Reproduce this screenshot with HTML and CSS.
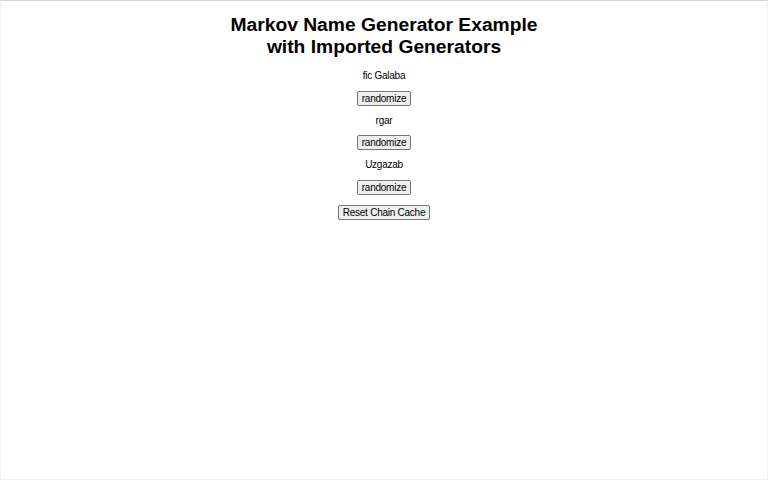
FILE: index.html
```html
<!DOCTYPE html>
<html lang="en">
<head>
    <meta charset="UTF-8">
    <title>Markov Name Generator Example</title>
    <link rel="stylesheet" href="styles.css">
</head>
<body>
    <h1>Markov Name Generator Example<br>with Imported Generators</h1>

    <main class="generators">
        <div class="generator">
            <p class="name">fic Galaba</p>
            <button>randomize</button>
        </div>
        <div class="generator">
            <p class="name">rgar</p>
            <button>randomize</button>
        </div>
        <div class="generator">
            <p class="name">Uzgazab</p>
            <button>randomize</button>
        </div>
        <button class="reset">Reset Chain Cache</button>
    </main>
</body>
</html>
```

FILE: styles.css
```css
* {
    box-sizing: border-box;
}

html, body {
    height: 100%;
}

body {
    margin: 0;
    border-top: 1px solid #d6d6d6;
    border-left: 1px solid #f2f2f2;
    border-right: 1px solid #f2f2f2;
    border-bottom: 1px solid #f2f2f2;
    font-family: "Liberation Sans", Arial, sans-serif;
    color: #000;
    background: #fff;
    text-align: center;
}

h1 {
    font-size: 19.25px;
    line-height: 22px;
    margin: 13px 0 11px;
}

.generators {
    display: flex;
    flex-direction: column;
    align-items: center;
    gap: 8px;
}

.generator {
    display: flex;
    flex-direction: column;
    align-items: center;
    gap: 8.5px;
}

.name {
    margin: 0;
    font-size: 10px;
    letter-spacing: -0.25px;
    line-height: 13px;
}

button {
    font-family: "Liberation Sans", Arial, sans-serif;
    font-size: 10px;
    letter-spacing: -0.25px;
    line-height: 13px;
    color: #000;
    padding: 0 4px;
    background: #efefef;
    border: 1px solid #767676;
    border-radius: 2px;
}

.reset {
    margin-top: 2.5px;
}
```
